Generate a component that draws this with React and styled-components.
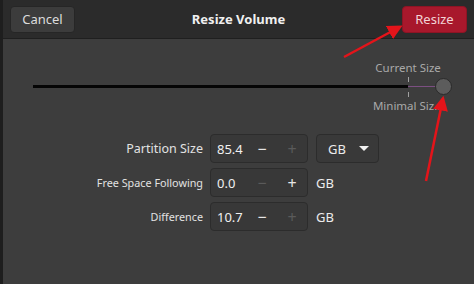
import React from "react"
import styled, { createGlobalStyle } from "styled-components"

const GlobalStyle = createGlobalStyle`
  html, body {
    margin: 0;
    padding: 0;
    background: #3d3d3d;
  }
  body {
    font-family: "Noto Sans", "Open Sans", sans-serif;
    overflow: hidden;
  }
`

const App = () => {
  const current = 85.4
  const max = 95.4
  const minimal = 85.4
  const pct = (minimal / max) * 100

  return (
    <Page>
      <GlobalStyle />
      <Edge />
      <Dialog>
        <Header>
          <HeaderButton>Cancel</HeaderButton>
          <Title>Resize Volume</Title>
          <HeaderButton destructive>Resize</HeaderButton>
        </Header>
        <Body>
          <Scale>
            <Track>
              <Filled style={{ width: `${pct}%` }} />
              <Rest />
              <Knob />
              <Mark style={{ left: `${pct}%` }}>
                <MarkLabel>Current Size</MarkLabel>
                <Tick />
                <Gap />
                <Tick />
                <MarkLabel>Minimal Siz…</MarkLabel>
              </Mark>
            </Track>
          </Scale>
          <Form>
            <Label>Partition Size</Label>
            <SpinBox>
              <SpinValue>{current}</SpinValue>
              <SpinButton>−</SpinButton>
              <SpinButton dim>+</SpinButton>
            </SpinBox>
            <Dropdown>
              GB
              <Caret />
            </Dropdown>

            <Label small>Free Space Following</Label>
            <SpinBox>
              <SpinValue>0.0</SpinValue>
              <SpinButton dim>−</SpinButton>
              <SpinButton>+</SpinButton>
            </SpinBox>
            <Unit>GB</Unit>

            <Label small>Difference</Label>
            <SpinBox>
              <SpinValue>10.7</SpinValue>
              <SpinButton>−</SpinButton>
              <SpinButton dim>+</SpinButton>
            </SpinBox>
            <Unit>GB</Unit>
          </Form>
        </Body>
      </Dialog>
      <Arrows viewBox="0 0 474 284">
        <defs>
          <marker
            id="head"
            markerWidth="6"
            markerHeight="6"
            refX="3"
            refY="3"
            orient="auto"
            markerUnits="strokeWidth"
          >
            <path d="M0,0 L6,3 L0,6 z" fill="#e4141a" />
          </marker>
        </defs>
        <line
          x1="344"
          y1="57"
          x2="396"
          y2="29"
          stroke="#e4141a"
          strokeWidth="2.5"
          markerEnd="url(#head)"
        />
        <line
          x1="426"
          y1="181"
          x2="442"
          y2="103"
          stroke="#e4141a"
          strokeWidth="2.5"
          markerEnd="url(#head)"
        />
      </Arrows>
    </Page>
  )
}

const Page = styled.div`
  position: relative;
  display: flex;
  width: 474px;
  height: 284px;
  overflow: hidden;
  background: #3d3d3d;
`

const Edge = styled.div`
  width: 3px;
  flex: none;
  background: #1e1e1e;
`

const Dialog = styled.div`
  flex: 1;
  display: flex;
  flex-direction: column;
`

const Header = styled.div`
  height: 38px;
  flex: none;
  display: flex;
  align-items: center;
  justify-content: space-between;
  padding: 0 7px;
  background: #2b2b2b;
  border-bottom: 1px solid #1f1f1f;
`

const HeaderButton = styled.div`
  width: 65px;
  height: 27px;
  box-sizing: border-box;
  display: flex;
  align-items: center;
  justify-content: center;
  border-radius: 4px;
  font-size: 13px;
  background: ${({ destructive }) => (destructive ? "#a8182c" : "#3c3c3c")};
  color: ${({ destructive }) => (destructive ? "#f2d4d7" : "#dcdcdc")};
  border: 1px solid ${({ destructive }) => (destructive ? "#8e1424" : "#262626")};
`

const Title = styled.div`
  font-size: 13px;
  font-weight: bold;
  color: #f0f0f0;
`

const Body = styled.div`
  flex: 1;
  display: flex;
  flex-direction: column;
`

const Scale = styled.div`
  height: 95px;
  display: flex;
  align-items: center;
  padding: 0 22px 0 30px;
`

const Track = styled.div`
  position: relative;
  flex: 1;
  height: 17px;
  display: flex;
  align-items: center;
`

const Filled = styled.div`
  height: 3px;
  background: #050505;
  flex: none;
`

const Rest = styled.div`
  flex: 1;
  height: 1px;
  background: #7c4f82;
`

const Knob = styled.div`
  width: 15px;
  height: 15px;
  flex: none;
  border-radius: 50%;
  background: #5c5c5c;
  border: 1px solid #2a2a2a;
`

const Mark = styled.div`
  position: absolute;
  top: -17px;
  width: 0;
  display: flex;
  flex-direction: column;
  align-items: center;
`

const MarkLabel = styled.div`
  font-size: 11.5px;
  color: #a9a9a9;
  white-space: nowrap;
  line-height: 14px;
`

const Tick = styled.div`
  width: 1px;
  height: 5px;
  background: #a0a0a0;
  margin: 2px 0;
`

const Gap = styled.div`
  height: 6px;
`

const Form = styled.div`
  display: grid;
  grid-template-columns: 200px 98px auto;
  grid-auto-rows: 29px;
  column-gap: 7px;
  row-gap: 5px;
  align-items: center;
`

const Label = styled.div`
  text-align: right;
  font-size: ${({ small }) => (small ? "10.8px" : "12.5px")};
  color: #e2e2e2;
`

const SpinBox = styled.div`
  height: 29px;
  box-sizing: border-box;
  display: flex;
  align-items: center;
  background: #383838;
  border: 1px solid #2c2c2c;
  border-radius: 4px;
`

const SpinValue = styled.div`
  flex: 1;
  padding-left: 6px;
  font-size: 13px;
  color: #f0f0f0;
`

const SpinButton = styled.div`
  width: 30px;
  text-align: center;
  font-size: 16px;
  color: ${({ dim }) => (dim ? "#5a5a5a" : "#e6e6e6")};
`

const Dropdown = styled.div`
  width: 63px;
  height: 29px;
  margin-left: 1px;
  box-sizing: border-box;
  display: flex;
  align-items: center;
  justify-content: space-between;
  padding: 0 9px 0 11px;
  background: #393939;
  border: 1px solid #2c2c2c;
  border-radius: 4px;
  font-size: 13px;
  color: #ececec;
`

const Caret = styled.div`
  width: 0;
  height: 0;
  border-left: 5px solid transparent;
  border-right: 5px solid transparent;
  border-top: 5px solid #f0f0f0;
`

const Unit = styled.div`
  margin-left: 1px;
  font-size: 13px;
  color: #ececec;
`

const Arrows = styled.svg`
  position: absolute;
  inset: 0;
  width: 474px;
  height: 284px;
  pointer-events: none;
`

export default App
